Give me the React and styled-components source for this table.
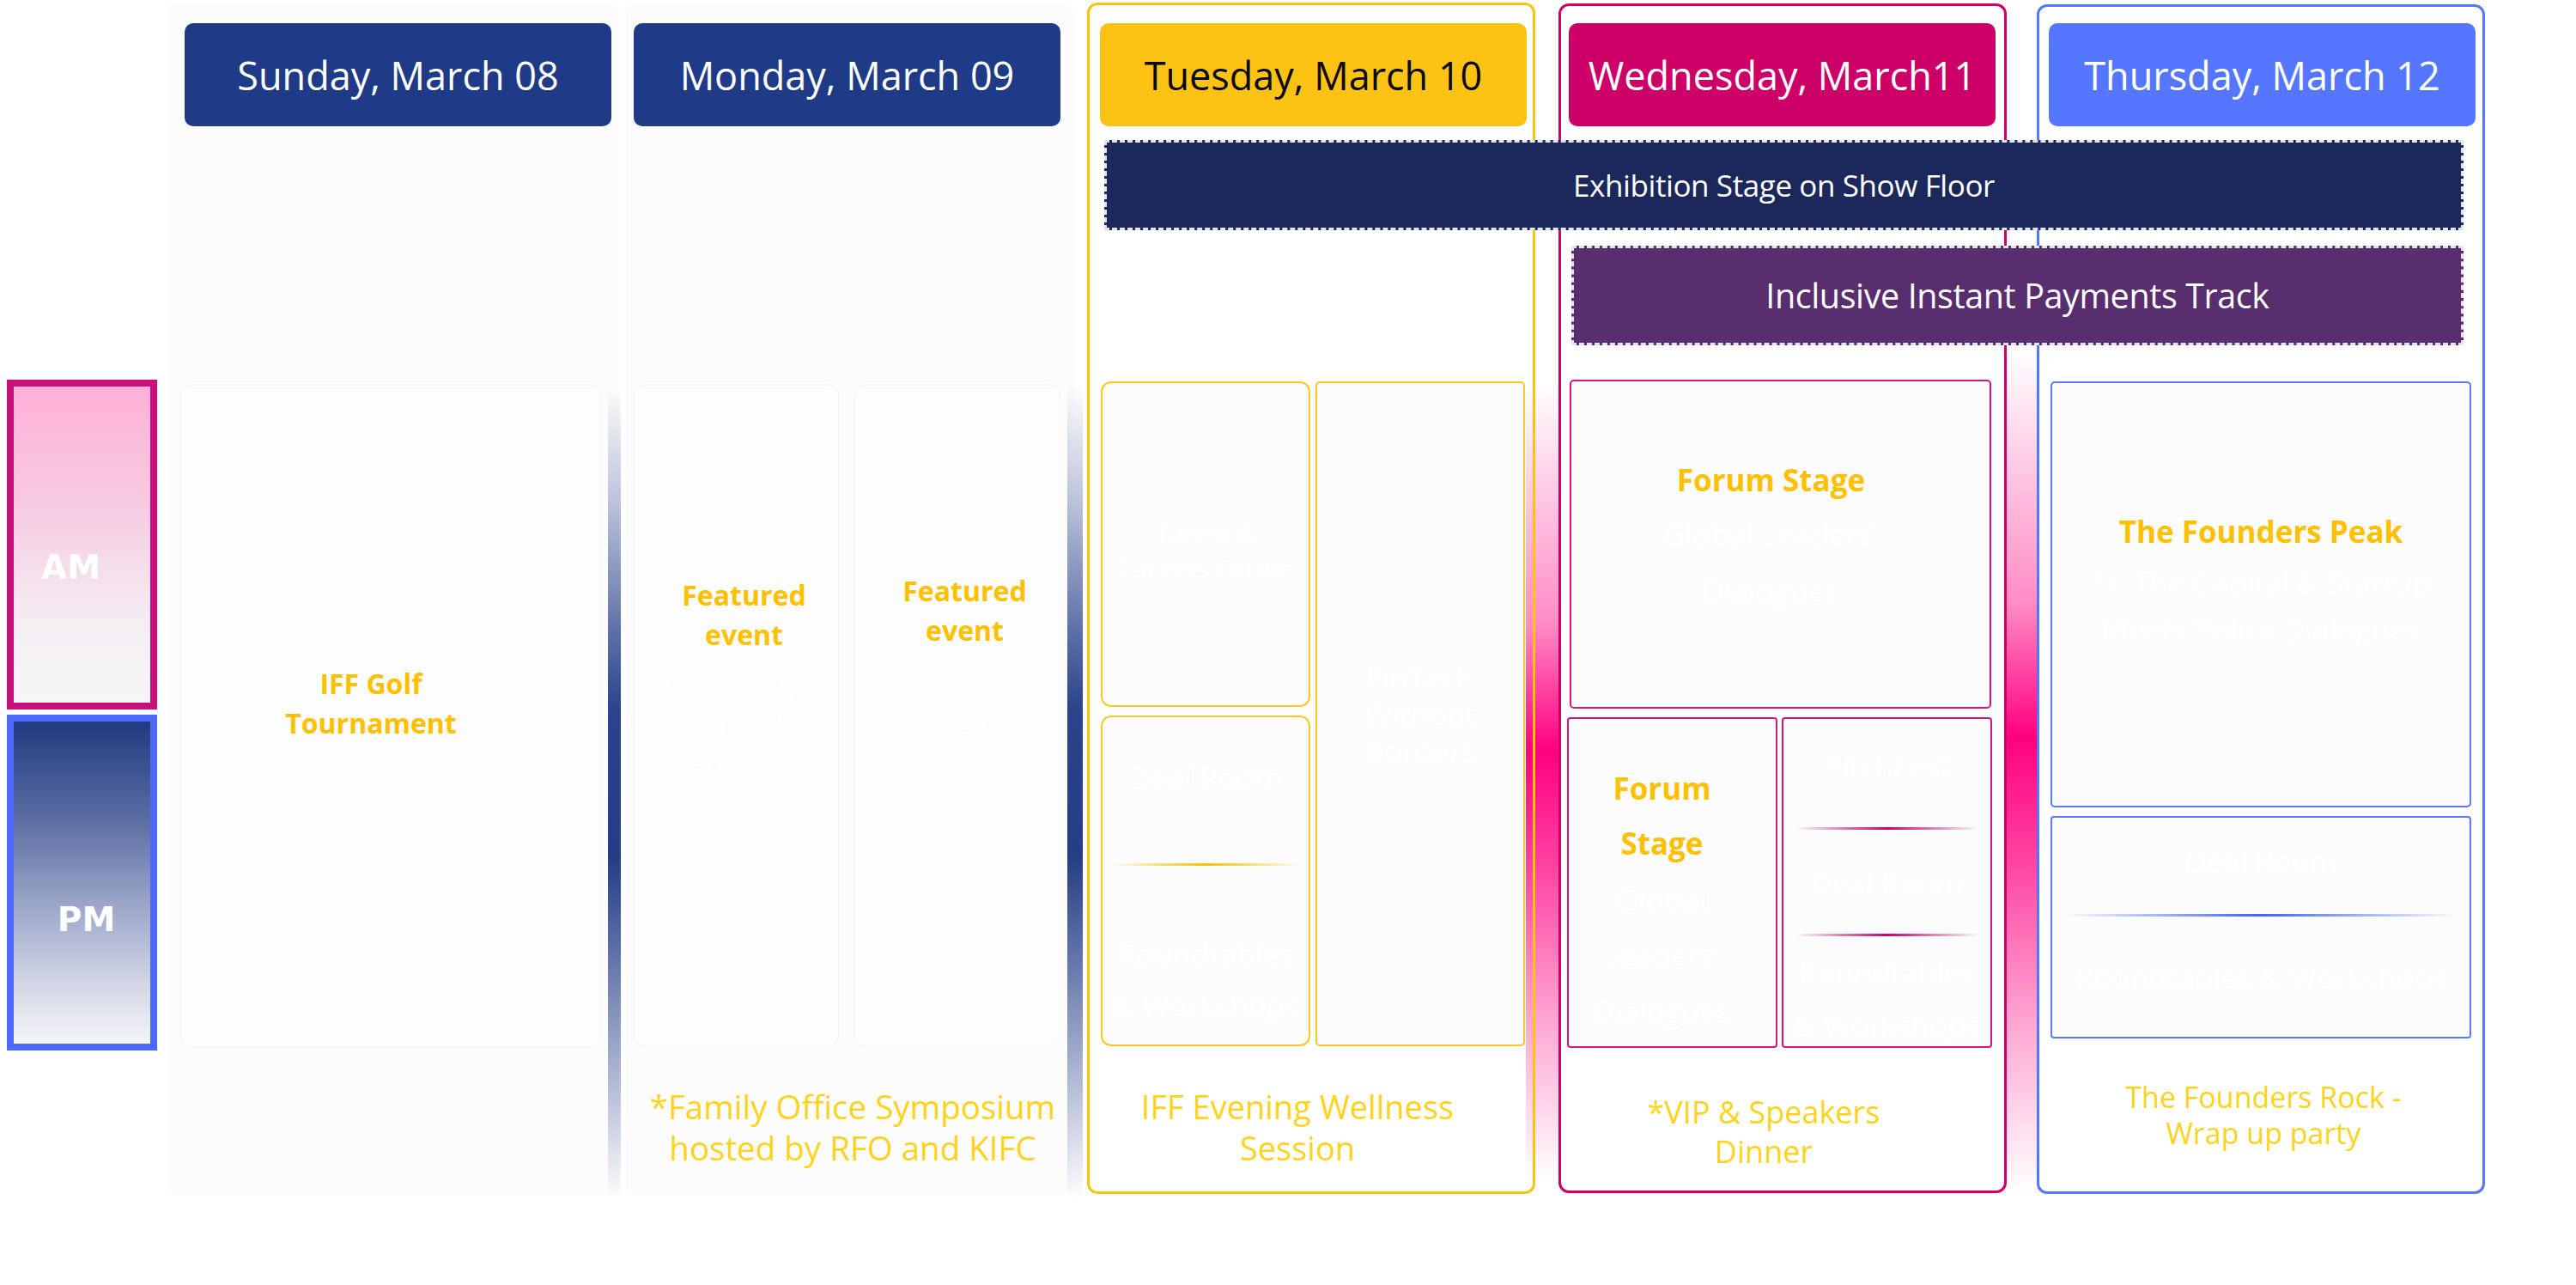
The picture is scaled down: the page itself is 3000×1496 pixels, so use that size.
import React from "react";
import styled, { createGlobalStyle } from "styled-components";

const GlobalStyle = createGlobalStyle`
  html, body {
    margin: 0;
    padding: 0;
    background: #ffffff;
  }
  body {
    font-family: "Open Sans", "Liberation Sans", sans-serif;
  }
`;

const YELLOW = "#ffc000";
const NOTE = "#ffd31c";

const Board = styled.div`
  display: grid;
  grid-template-columns: 195px 513px 15px 520px 18px 5px 511px 11px 27px 522px 35px 522px 1fr;
  grid-template-rows: 163px 105px 18px 116px 40px 781px 169px 104px;
  width: 3000px;
  height: 1496px;
  overflow: hidden;
`;

const DayPanel = styled.div`
  grid-column: ${p => p.$col};
  grid-row: 1 / 8;
  margin: 3px ${p => p.$mr}px 0 ${p => p.$ml}px;
  background: #fcfcfc;
  border-radius: 10px;
`;

const DayFrame = styled.div`
  grid-column: ${p => p.$col};
  grid-row: 1 / 8;
  margin: ${p => p.$mt}px 0 ${p => p.$mb}px 0;
  position: relative;
  border-radius: 12px;

  &::after {
    content: "";
    position: absolute;
    inset: 0;
    border: 3px solid ${p => p.$color};
    border-radius: 12px;
    z-index: 2;
    pointer-events: none;
  }
`;

const DayHeader = styled.div`
  grid-column: ${p => p.$col};
  grid-row: 1;
  align-self: start;
  justify-self: start;
  margin: 27px 0 0 ${p => p.$ml}px;
  width: 497px;
  height: 120px;
  border-radius: 10px;
  background: ${p => p.$bg};
  color: ${p => p.$fg || "#ffffff"};
  display: flex;
  align-items: center;
  justify-content: center;
  font-size: 45px;
  font-weight: 400;
  white-space: nowrap;
`;

const Connector = styled.div`
  grid-column: ${p => p.$col};
  grid-row: ${p => p.$row};
  margin: ${p => p.$mt}px 0 ${p => p.$mb}px 0;
  position: relative;
  z-index: 1;
  background: ${p =>
    p.$pink
      ? "linear-gradient(to bottom, rgba(255,0,128,0) 0%, rgba(255,0,128,0.18) 12%, rgba(255,0,128,0.45) 30%, #ff0080 46%, rgba(255,0,128,0.75) 60%, rgba(255,0,128,0.35) 80%, rgba(255,0,128,0) 100%)"
      : "linear-gradient(to bottom, rgba(43,67,140,0) 0%, rgba(43,67,140,0.3) 14%, rgba(43,67,140,0.75) 30%, #2b438c 40%, #263d85 58%, rgba(43,67,140,0.7) 72%, rgba(43,67,140,0.3) 88%, rgba(43,67,140,0) 100%)"};
`;

const TrackBar = styled.div`
  grid-column: ${p => p.$col};
  grid-row: ${p => p.$row};
  margin: 0 25px 0 ${p => p.$ml}px;
  position: relative;
  z-index: 3;
  box-sizing: border-box;
  background: ${p => p.$bg};
  border: 3px dashed #e4e4ea;
  display: flex;
  align-items: center;
  justify-content: center;
  color: #ffffff;
  font-size: ${p => p.$size}px;
  letter-spacing: -0.4px;
  white-space: nowrap;
`;

const TimeColumn = styled.div`
  grid-column: 1;
  grid-row: 6;
  display: flex;
  flex-direction: column;
  gap: 6px;
  padding-left: 8px;
`;

const TimeBlock = styled.div`
  box-sizing: border-box;
  width: 175px;
  height: ${p => p.$h}px;
  border: 8px solid ${p => p.$border};
  background: ${p => p.$fill};
  display: flex;
  align-items: center;
  justify-content: center;
  padding: ${p => p.$pad};
  color: #ffffff;
  font-family: "DejaVu Sans", "Open Sans", sans-serif;
  font-weight: 700;
  font-size: 39px;
`;

const SessionBox = styled.div`
  box-sizing: border-box;
  grid-column: ${p => p.$col || "auto"};
  grid-row: ${p => p.$row || "auto"};
  margin: ${p => p.$margin || "0"};
  height: ${p => (p.$h ? `${p.$h}px` : "auto")};
  border: 2px solid ${p => p.$border};
  border-radius: ${p => p.$radius}px;
  background: ${p => p.$bg || "#fcfcfc"};
  display: flex;
  flex-direction: column;
  align-items: center;
  justify-content: ${p => (p.$center ? "center" : "flex-start")};
  padding: ${p => p.$pad || "0"};
  text-align: center;
`;

const PairGrid = styled.div`
  grid-column: ${p => p.$col};
  grid-row: 6;
  margin: ${p => p.$margin};
  display: grid;
  grid-template-columns: ${p => p.$cols};
  grid-template-rows: ${p => p.$rows};
  column-gap: ${p => p.$cgap}px;
  row-gap: 10px;
`;

const Stack = styled.div`
  grid-column: 12 / 13;
  grid-row: 6;
  margin: 2px 16px 0 16px;
  display: flex;
  flex-direction: column;
  gap: 10px;
`;

const Highlight = styled.div`
  color: ${YELLOW};
  font-weight: 700;
  font-size: ${p => p.$size}px;
  line-height: ${p => p.$lh}px;
  margin-left: ${p => p.$nudge || 0}px;
  white-space: nowrap;
`;

const Ghost = styled.div`
  color: #ffffff;
  font-size: ${p => p.$size || 35}px;
  line-height: ${p => p.$lh}px;
  margin-top: ${p => p.$mt || 0}px;
  white-space: nowrap;
`;

const Divider = styled.div`
  flex: none;
  width: ${p => p.$w}px;
  height: 3px;
  margin-top: ${p => p.$mt}px;
  background: linear-gradient(to right, rgba(255,255,255,0), ${p => p.$color} 50%, rgba(255,255,255,0));
`;

const Evening = styled.div`
  grid-column: ${p => p.$col};
  grid-row: 7;
  margin-top: ${p => p.$mt}px;
  padding: ${p => p.$pad || "0"};
  text-align: center;
  color: ${NOTE};
  font-size: ${p => p.$size}px;
  line-height: ${p => p.$lh}px;
  white-space: nowrap;
`;

const Footnote = styled.div`
  grid-column: 12 / 14;
  grid-row: 8;
  margin: 30px 0 0 177px;
  color: #ffffff;
  font-size: 39px;
  line-height: 54px;
  white-space: nowrap;
`;

const headers = [
  { col: "2 / 3", ml: 20, bg: "#1f3a87", label: "Sunday, March 08" },
  { col: "4 / 5", ml: 15, bg: "#1f3a87", label: "Monday, March 09" },
  { col: "7 / 9", ml: 15, bg: "#fcc314", fg: "#0a0a0a", label: "Tuesday, March 10" },
  { col: "10 / 11", ml: 12, bg: "#cc0066", label: "Wednesday, March11" },
  { col: "12 / 13", ml: 14, bg: "#5577ff", label: "Thursday, March 12" },
];

const faint = "#f8f8f9";

export default function App() {
  return (
    <>
      <GlobalStyle />
      <Board>
        <DayPanel $col="2 / 4" $ml={0} $mr={2} />
        <DayPanel $col="4 / 6" $ml={6} $mr={11} />

        <Connector $col="3 / 4" $row="6 / 8" $mt={8} $mb={-2} />
        <Connector $col="5 / 6" $row="6 / 8" $mt={4} $mb={-3} />
        <Connector $col="8 / 10" $row="6 / 8" $mt={4} $mb={17} $pink />
        <Connector $col="11 / 12" $row="5 / 8" $mt={5} $mb={4} $pink />

        <DayFrame $col="7 / 9" $mt={3} $mb={2} $color="#ffc20e" />
        <DayFrame $col="10 / 11" $mt={4} $mb={3} $color="#cc0066" />
        <DayFrame $col="12 / 13" $mt={5} $mb={2} $color="#5577ff" />

        {headers.map(h => (
          <DayHeader key={h.label} $col={h.col} $ml={h.ml} $bg={h.bg} $fg={h.fg}>
            {h.label}
          </DayHeader>
        ))}

        <TrackBar $col="7 / 13" $row="2" $ml={20} $bg="#1c285c" $size={35}>
          Exhibition Stage on Show Floor
        </TrackBar>
        <TrackBar $col="10 / 13" $row="4" $ml={15} $bg="#582e6e" $size={39.5}>
          Inclusive Instant Payments Track
        </TrackBar>

        <TimeColumn>
          <TimeBlock
            $h={384}
            $border="#c8107c"
            $fill="linear-gradient(to bottom, #ffb0d8 0%, #f6cde2 40%, #f4eef3 75%, #f6f6f8 100%)"
            $pad="52px 26px 0 0"
          >
            AM
          </TimeBlock>
          <TimeBlock
            $h={391}
            $border="#4d68ff"
            $fill="linear-gradient(to bottom, #213a80 0%, #5a6ca3 30%, #97a2c6 55%, #d3d7e6 82%, #f6f6f8 100%)"
            $pad="86px 0 0 10px"
          >
            PM
          </TimeBlock>
        </TimeColumn>

        {/* Sunday */}
        <SessionBox
          $col="2 / 3"
          $row="6"
          $margin="5px 7px 3px 14px"
          $border={faint}
          $bg="#fdfdfd"
          $radius={14}
          $pad="324px 46px 0 0"
        >
          <Highlight $size={32} $lh={46}>
            IFF Golf
            <br />
            Tournament
          </Highlight>
        </SessionBox>

        {/* Monday */}
        <PairGrid $col="4 / 5" $margin="5px 8px 3px 14px" $cols="241px 241px" $rows="772px" $cgap={16}>
          <SessionBox $border={faint} $bg="#fdfdfd" $radius={14} $pad="221px 0 0 0">
            <Highlight $size={32} $lh={46} $nudge={18}>
              Featured
              <br />
              event
            </Highlight>
            <Ghost $lh={43} $mt={18}>
              *SSA Central
              <br />
              Banks'
              <br />
              Gathering
            </Ghost>
          </SessionBox>
          <SessionBox $border={faint} $bg="#fdfdfd" $radius={14} $pad="216px 0 0 0">
            <Highlight $size={32} $lh={46} $nudge={18}>
              Featured
              <br />
              event
            </Highlight>
            <Ghost $size={30} $lh={41} $mt={24}>
              *Data Protection
              <br />
              Workshop
            </Ghost>
          </SessionBox>
        </PairGrid>

        {/* Tuesday */}
        <PairGrid $col="7 / 9" $margin="2px 12px 4px 16px" $cols="244px 244px" $rows="379px 385px" $cgap={6}>
          <SessionBox $border="#ffc722" $radius={12} $center $pad="14px 0 0 0">
            <Ghost $size={30} $lh={41}>
              Talent &amp;
              <br />
              Careers Forum
            </Ghost>
          </SessionBox>
          <SessionBox $row="1 / 3" $col="2" $border="#ffc722" $radius={5} $center>
            <Ghost $lh={43}>
              FinTech
              <br />
              Without
              <br />
              Borders
            </Ghost>
          </SessionBox>
          <SessionBox $row="2" $col="1" $border="#ffc722" $radius={12} $pad="45px 0 0 0">
            <Ghost $lh={50}>Deal Room</Ghost>
            <Divider $w={219} $mt={75} $color={YELLOW} />
            <Ghost $lh={59} $mt={73}>
              Roundtables
              <br />
              &amp; Workshops
            </Ghost>
          </SessionBox>
        </PairGrid>

        {/* Wednesday */}
        <PairGrid $col="10 / 11" $margin="0 17px 3px 10px" $cols="245px 245px" $rows="383px 385px" $cgap={5}>
          <SessionBox $col="1 / 3" $margin="0 1px 0 3px" $border="#d4187a" $radius={5} $pad="92px 22px 0 0">
            <Highlight $size={35} $lh={46}>Forum Stage</Highlight>
            <Ghost $lh={66} $mt={7}>
              Global Leaders'
              <br />
              Dialogues
            </Ghost>
          </SessionBox>
          <SessionBox $border="#d4187a" $radius={4} $pad="49px 24px 0 0">
            <Highlight $size={35} $lh={64}>
              Forum
              <br />
              Stage
            </Highlight>
            <Ghost $lh={65}>
              Global
              <br />
              Leaders'
              <br />
              Dialogues
            </Ghost>
          </SessionBox>
          <SessionBox $border="#d4187a" $radius={4} $pad="30px 0 0 0">
            <Ghost $lh={50}>PitchFest</Ghost>
            <Divider $w={214} $mt={46} $color="#cc0066" />
            <Ghost $lh={50} $mt={37}>
              Deal Room
            </Ghost>
            <Divider $w={214} $mt={34} $color="#cc0066" />
            <Ghost $lh={62} $mt={11}>
              Roundtables
              <br />
              &amp; Workshops
            </Ghost>
          </SessionBox>
        </PairGrid>

        {/* Thursday */}
        <Stack>
          <SessionBox $h={496} $border="#5a7bff" $radius={5} $pad="150px 0 0 0">
            <Highlight $size={35} $lh={46}>The Founders Peak</Highlight>
            <Ghost $lh={55} $mt={8}>
              Ft. The Capital &amp; Startup
              <br />
              Meets Policy Dialogues
            </Ghost>
          </SessionBox>
          <SessionBox $h={259} $border="#5a7bff" $radius={4} $pad="26px 0 0 0">
            <Ghost $lh={50}>Deal Room</Ghost>
            <Divider $w={456} $mt={36} $color="#3f63ff" />
            <Ghost $lh={50} $mt={46}>
              Roundtables &amp; Workshops
            </Ghost>
          </SessionBox>
        </Stack>

        <Evening $col="4 / 5" $mt={41} $pad="0 0 0 20px" $size={38.5} $lh={48}>
          *Family Office Symposium
          <br />
          hosted by RFO and KIFC
        </Evening>
        <Evening $col="7 / 9" $mt={41} $pad="0 32px 0 0" $size={38} $lh={48}>
          IFF Evening Wellness
          <br />
          Session
        </Evening>
        <Evening $col="10 / 11" $mt={49} $pad="0 44px 0 0" $size={36} $lh={46}>
          *VIP &amp; Speakers
          <br />
          Dinner
        </Evening>
        <Evening $col="12 / 13" $mt={33} $pad="0 0 0 6px" $size={34} $lh={42}>
          The Founders Rock -
          <br />
          Wrap up party
        </Evening>

        <Footnote>*By Invitation Only</Footnote>
      </Board>
    </>
  );
}
